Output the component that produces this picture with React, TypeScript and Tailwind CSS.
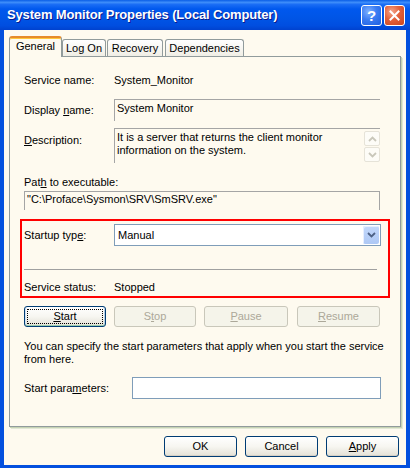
import React from "react";

type BtnProps = {
  children: React.ReactNode;
  w: string;
  disabled?: boolean;
  focused?: boolean;
};

function XpButton({ children, w, disabled, focused }: BtnProps) {
  if (disabled) {
    return (
      <div className={`${w} h-[21px] flex items-center justify-center rounded-[3px] border border-[#c9c7ba] bg-[#f5f4ea] text-[#aca899]`}>
        {children}
      </div>
    );
  }
  return (
    <div
      className={`${w} h-[21px] p-[2px] rounded-[3px] border border-[#003c74] bg-gradient-to-b from-white via-[#f7f6f1] to-[#e3e1d6] ${
        focused ? "shadow-[inset_0_-1px_0_#99ccb0,inset_-1px_0_0_#b5d0e8,inset_1px_0_0_#cee0f3]" : "shadow-[inset_0_-1px_0_#d6d0c5]"
      }`}
    >
      <div className={`h-full flex items-center justify-center ${focused ? "border border-dotted border-black" : ""}`}>
        {children}
      </div>
    </div>
  );
}

function Chevron({ color, down }: { color: string; down?: boolean }) {
  return (
    <svg width="9" height="6" viewBox="0 0 9 6">
      <polyline
        points={down ? "1,1 4.5,4.5 8,1" : "1,5 4.5,1.5 8,5"}
        fill="none"
        stroke={color}
        strokeWidth="1.8"
      />
    </svg>
  );
}

export default function App() {
  return (
    <div className="w-[410px] h-[468px] flex flex-col bg-[#0450de] font-['Liberation_Sans',Arial,sans-serif] text-[11px] leading-[13px] text-black overflow-hidden">
      {/* title bar */}
      <div className="h-[30px] flex items-center pl-[7px] pr-[5px] bg-[linear-gradient(to_bottom,#0a5ee6_0%,#3d8dfa_8%,#1a6df5_15%,#0058ee_30%,#0055e6_60%,#004ee0_85%,#0042cf_100%)]">
        <span className="flex-1 text-white font-bold text-[13px] leading-[16px] tracking-[-0.15px] [text-shadow:1px_1px_0_#0a1a8c]">
          System Monitor Properties (Local Computer)
        </span>
        <div className="flex gap-[2px]">
          <div className="w-[21px] h-[21px] rounded-[3px] border border-white bg-[radial-gradient(circle_at_35%_30%,#7fb1ff_0%,#3b7cf2_45%,#1d5ee0_100%)] flex items-center justify-center text-white font-bold text-[15px] leading-none">
            ?
          </div>
          <div className="w-[21px] h-[21px] rounded-[3px] border border-white bg-[radial-gradient(circle_at_35%_30%,#f5a58a_0%,#e2603a_45%,#c7451f_100%)] flex items-center justify-center">
            <svg width="11" height="11" viewBox="0 0 11 11">
              <path d="M1.5 1.5 L9.5 9.5 M9.5 1.5 L1.5 9.5" stroke="white" strokeWidth="2" strokeLinecap="square" />
            </svg>
          </div>
        </div>
      </div>

      {/* client area */}
      <div className="flex-1 mx-[4px] mb-[3px] bg-[#fefaef] pl-[5px] pr-[6px] pt-[6px] flex flex-col">
        {/* tabs */}
        <div className="h-[20px] flex items-end">
          <div className="relative z-10 w-[53px] h-[21px] -mb-[1px] pt-[2px] flex justify-center rounded-t-[3px] border-t-2 border-x border-[#919b9c] border-t-[#e68b2c] bg-[#fefaef] shadow-[inset_0_1px_0_#ffc73c]">
            General
          </div>
          <div className="w-[44px] h-[17px] flex items-center justify-center rounded-t-[3px] border border-b-0 border-[#919b9c] bg-gradient-to-b from-white to-[#f0eee5]">
            Log On
          </div>
          <div className="ml-[1px] w-[56px] h-[17px] flex items-center justify-center rounded-t-[3px] border border-b-0 border-[#919b9c] bg-gradient-to-b from-white to-[#f0eee5]">
            Recovery
          </div>
          <div className="ml-[2px] w-[79px] h-[17px] flex items-center justify-center rounded-t-[3px] border border-b-0 border-[#919b9c] bg-gradient-to-b from-white to-[#f0eee5]">
            Dependencies
          </div>
        </div>

        {/* panel */}
        <div className="w-[392px] h-[371px] border border-[#919b9c] bg-[#fefaef] shadow-[1px_1px_0_#c6d3b4,2px_2px_0_#e2e8d6] pl-[14px] flex flex-col">
          <div className="mt-[12px] h-[22px] flex items-center">
            <span className="w-[90px]">Service name:</span>
            <span>System_Monitor</span>
          </div>

          <div className="mt-[8px] h-[22px] flex items-center">
            <span className="w-[90px]">
              Display <u>n</u>ame:
            </span>
            <div className="w-[266px] h-[22px] border-t border-l border-[#a5a5a5] pl-[2px] pt-[2px]">System Monitor</div>
          </div>

          <div className="mt-[7px] h-[35px] flex items-start">
            <span className="w-[90px] pt-[6px]">
              <u>D</u>escription:
            </span>
            <div className="w-[266px] h-[35px] border-t border-l border-[#a5a5a5] pl-[2px] flex">
              <div className="flex-1 pt-[2px]">
                It is a server that returns the client monitor
                <br />
                information on the system.
              </div>
              <div className="w-[16px] pt-[2px] flex flex-col gap-[1px]">
                <div className="h-[15px] rounded-[2px] border border-[#e6e3d8] bg-[#fdfcf7] flex items-center justify-center">
                  <Chevron color="#c9c7ba" />
                </div>
                <div className="h-[15px] rounded-[2px] border border-[#e6e3d8] bg-[#fdfcf7] flex items-center justify-center">
                  <Chevron color="#c9c7ba" down />
                </div>
              </div>
            </div>
          </div>

          <div className="mt-[13px]">
            Pat<u>h</u> to executable:
          </div>
          <div className="mt-[2px] w-[356px] h-[19px] border-t border-x border-[#a5a5a5] pl-[2px] pt-[1px]">
            "C:\Proface\Sysmon\SRV\SmSRV.exe"
          </div>

          {/* highlighted area */}
          <div className="mt-[9px] -ml-[4px] w-[370px] h-[79px] border-2 border-[#ff0000] pl-[2px] pt-[3px] flex flex-col">
            <div className="h-[22px] flex items-center">
              <span className="w-[90px]">
                Startup typ<u>e</u>:
              </span>
              <div className="w-[267px] h-[22px] border border-[#7f9db9] bg-white flex items-center pl-[3px] pr-[1px]">
                <span className="flex-1">Manual</span>
                <div className="w-[16px] h-[18px] rounded-[2px] bg-gradient-to-b from-[#c3d8fb] to-[#aec8f5] shadow-[inset_1px_1px_0_#e7efff] flex items-center justify-center">
                  <Chevron color="#4d6185" down />
                </div>
              </div>
            </div>
            <div className="mt-[23px] w-[353px] h-[1px] bg-[#a0a0a0]" />
            <div className="mt-[11px] flex">
              <span className="w-[90px]">Service status:</span>
              <span>Stopped</span>
            </div>
          </div>

          <div className="mt-[8px] flex">
            <XpButton w="w-[82px]" focused>
              <span>
                <u>S</u>tart
              </span>
            </XpButton>
            <div className="ml-[8px]">
              <XpButton w="w-[82px]" disabled>
                <span>
                  S<u>t</u>op
                </span>
              </XpButton>
            </div>
            <div className="ml-[8px]">
              <XpButton w="w-[84px]" disabled>
                <span>
                  <u>P</u>ause
                </span>
              </XpButton>
            </div>
            <div className="ml-[9px]">
              <XpButton w="w-[83px]" disabled>
                <span>
                  <u>R</u>esume
                </span>
              </XpButton>
            </div>
          </div>

          <div className="mt-[13px]">
            You can specify the start parameters that apply when you start the service
            <br />
            from here.
          </div>

          <div className="mt-[11px] h-[22px] flex items-center">
            <span className="w-[108px]">
              Start para<u>m</u>eters:
            </span>
            <div className="w-[249px] h-[22px] border border-[#7f9db9] bg-white" />
          </div>
        </div>

        {/* dialog buttons */}
        <div className="mt-[9px] flex justify-end gap-[8px] pr-[1px]">
          <XpButton w="w-[73px]">OK</XpButton>
          <XpButton w="w-[73px]">Cancel</XpButton>
          <XpButton w="w-[73px]">
            <span>
              <u>A</u>pply
            </span>
          </XpButton>
        </div>
      </div>
    </div>
  );
}
